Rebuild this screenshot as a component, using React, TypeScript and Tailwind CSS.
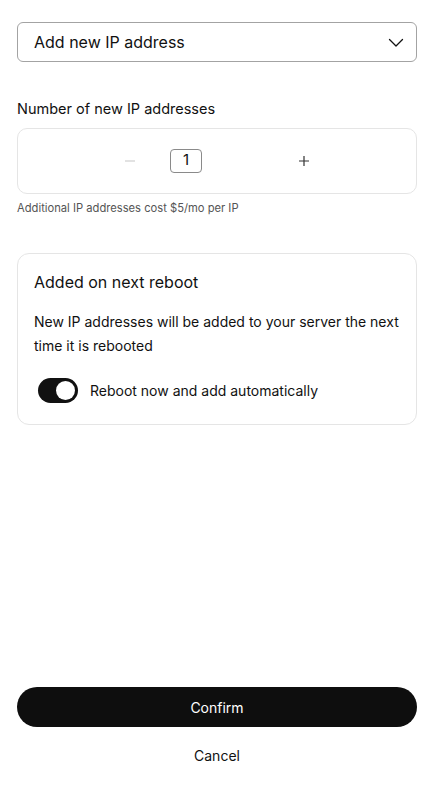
import React, { useState } from 'react'

const ChevronDown = () => (
  <svg width="16" height="16" viewBox="0 0 16 16" fill="none" stroke="#111" strokeWidth="1.3" strokeLinecap="round" strokeLinejoin="round">
    <path d="M1.5 5.5l6.5 6.5L14.5 5.5" />
  </svg>
)

const App: React.FC = () => {
  const [count, setCount] = useState(1)
  const [rebootNow, setRebootNow] = useState(true)

  return (
    <div className="min-h-[785px] w-[432px] bg-white flex flex-col pl-[17px] pr-[15px] pt-[22px] pb-[10px] text-[#111] font-['Inter',sans-serif]">
      <button className="h-10 w-full flex items-center justify-between pl-[16px] pr-[12px] border border-[#a3a3a3] rounded-[6px] text-left">
        <span className="text-[16px] leading-none">Add new IP address</span>
        <ChevronDown />
      </button>

      <div className="mt-[40px]">
        <p className="text-[14.5px] leading-none">Number of new IP addresses</p>
        <div className="mt-[11px] h-[66px] w-full border border-[#e5e5e5] rounded-[10px] flex items-center">
          <button
            onClick={() => setCount((c) => Math.max(1, c - 1))}
            className="ml-[92px] w-10 h-8 flex items-center justify-center text-[#cfcfcf]"
          >
            <svg width="12" height="12" viewBox="0 0 12 12" stroke="currentColor" strokeWidth="1.2">
              <path d="M1 6h10" />
            </svg>
          </button>
          <div className="ml-[20px] w-8 h-6 border border-[#8a8a8a] rounded-[4px] flex items-center justify-center text-[15px]">
            {count}
          </div>
          <button
            onClick={() => setCount((c) => c + 1)}
            className="ml-[82px] w-10 h-8 flex items-center justify-center text-[#333]"
          >
            <svg width="12" height="12" viewBox="0 0 12 12" stroke="currentColor" strokeWidth="1.2">
              <path d="M1 6h10M6 1v10" />
            </svg>
          </button>
        </div>
        <p className="mt-[9px] text-[11.2px] text-[#555] leading-none">Additional IP addresses cost $5/mo per IP</p>
      </div>

      <div className="mt-[39px] border border-[#e5e5e5] rounded-[12px] px-[16px] pt-[16px] pb-[21px]">
        <h3 className="text-[16px] leading-[24px]">Added on next reboot</h3>
        <p className="mt-[16px] text-[14px] leading-[24px]">
          New IP addresses will be added to your server the next time it is rebooted
        </p>
        <div className="mt-[20px] flex items-center gap-[12px] pl-[4px]">
          <button
            onClick={() => setRebootNow((v) => !v)}
            className={`w-10 h-[25px] rounded-full p-[3px] flex items-center ${rebootNow ? 'bg-[#111] justify-end' : 'bg-[#d4d4d4] justify-start'}`}
          >
            <span className="w-[19px] h-[19px] rounded-full bg-white" />
          </button>
          <span className="text-[14px]">Reboot now and add automatically</span>
        </div>
      </div>

      <div className="flex-1" />

      <button className="h-10 w-full rounded-full bg-[#0e0e0e] text-white text-[14px]">Confirm</button>
      <button className="mt-[8px] h-10 w-full text-[14px]">Cancel</button>
    </div>
  )
}

export default App
